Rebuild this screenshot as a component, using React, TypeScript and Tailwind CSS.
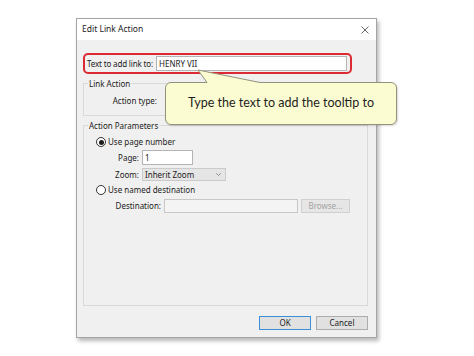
import React from 'react';

export default function App() {
  return (
    <div className="relative w-[474px] h-[356px] bg-white pt-[18px] pl-[76px] font-['Segoe_UI','Noto_Sans',sans-serif] text-[8px] text-[#1b1b1b]">
      {/* Dialog window */}
      <div className="w-[301px] h-[320px] flex flex-col border border-[#a5a5a5] shadow-[2px_3px_4px_rgba(0,0,0,0.28)]">
        {/* Title bar */}
        <div className="h-[21px] flex items-center justify-between bg-white pl-[5px] pr-[7px]">
          <span className="text-[8.5px] text-[#222]">Edit Link Action</span>
          <svg width="8" height="8" viewBox="0 0 8 8">
            <path d="M0.5 0.5 L7.5 7.5 M7.5 0.5 L0.5 7.5" stroke="#555" strokeWidth="0.9" />
          </svg>
        </div>

        {/* Body */}
        <div className="flex-1 flex flex-col bg-[#f0f0f0] pl-[6px] pr-[8px] pt-[13px]">
          {/* Highlighted text row */}
          <div className="w-[269px] h-[21px] flex items-center justify-between rounded-[5px] border-2 border-[#dc2a32] pl-[2px] pr-[3px]">
            <span className="whitespace-nowrap tracking-[-0.15px]">Text to add link to:</span>
            <div className="w-[191px] h-[15px] flex items-center bg-white border border-[#b4b4b4] pl-[2px]">HENRY VII</div>
          </div>

          {/* Link Action group */}
          <fieldset className="mt-[4px] h-[38px] border border-[#d9d9d9]">
            <legend className="ml-[4px] px-[1px] leading-[11px]">Link Action</legend>
            <div className="mt-[5px] flex items-center h-[14px]">
              <span className="w-[55px] ml-[18px] text-right">Action type:</span>
              <div className="ml-[10px] w-[150px] h-[14px] bg-[#e5e5e5] border border-[#c2c2c2]" />
            </div>
          </fieldset>

          {/* Action Parameters group */}
          <fieldset className="mt-[4px] h-[186px] border border-[#d9d9d9]">
            <legend className="ml-[4px] px-[1px] leading-[11px]">Action Parameters</legend>

            <div className="mt-[5px] pl-[12px] flex items-center h-[12px] gap-[2px]">
              <span className="w-[10px] h-[10px] rounded-full border border-[#333] bg-white flex items-center justify-center">
                <span className="w-[5px] h-[5px] rounded-full bg-[#1b1b1b]" />
              </span>
              <span>Use page number</span>
            </div>

            <div className="mt-[2px] flex items-center h-[15px]">
              <span className="w-[55px] text-right">Page:</span>
              <div className="ml-[3px] w-[51px] h-[15px] flex items-center bg-white border border-[#b4b4b4] pl-[2px]">1</div>
            </div>

            <div className="mt-[3px] flex items-center h-[13px]">
              <span className="w-[55px] text-right">Zoom:</span>
              <div className="ml-[3px] w-[84px] h-[13px] flex items-center justify-between bg-[#e5e5e5] border border-[#cacaca] pl-[2px] pr-[4px]">
                <span>Inherit Zoom</span>
                <svg width="5" height="3" viewBox="0 0 5 3">
                  <path d="M0.3 0.3 L2.5 2.5 L4.7 0.3" fill="none" stroke="#777" strokeWidth="0.8" />
                </svg>
              </div>
            </div>

            <div className="mt-[3px] pl-[12px] flex items-center h-[12px] gap-[2px]">
              <span className="w-[10px] h-[10px] rounded-full border border-[#333] bg-white" />
              <span>Use named destination</span>
            </div>

            <div className="mt-[3px] flex items-center h-[14px]">
              <span className="w-[77px] text-right">Destination:</span>
              <div className="ml-[3px] w-[134px] h-[14px] bg-[#f4f4f4] border border-[#c8c8c8]" />
              <div className="ml-[3px] w-[49px] h-[14px] flex items-center justify-center bg-[#e6e6e6] border border-[#d0d0d0] text-[#a3a3a3]">Browse...</div>
            </div>
          </fieldset>

          {/* Buttons */}
          <div className="mt-[10px] flex justify-end gap-[5px]">
            <button className="w-[52px] h-[14px] flex items-center justify-center bg-[#e1e1e1] border border-[#3c8fd6]">OK</button>
            <button className="w-[52px] h-[14px] flex items-center justify-center bg-[#e1e1e1] border border-[#adadad]">Cancel</button>
          </div>
        </div>
      </div>

      {/* Callout tooltip */}
      <div className="absolute left-[165px] top-[82px] w-[232px] h-[43px] flex items-center justify-center rounded-[6px] border border-[#93937a] bg-[#fcfcd2] font-['Lato',sans-serif] text-[12.5px] text-[#1e1e1e] shadow-[1px_1px_2px_rgba(0,0,0,0.15)]">
        Type the text to add the tooltip to
      </div>
      <svg className="absolute left-[195px] top-[68px]" width="70" height="17" viewBox="0 0 70 17">
        <polygon points="3,2 12,14.5 12,16.5 65,16.5 65,14.5" fill="#fcfcd2" />
        <path d="M3 2 L12 14.5 M3 2 L65 14.5" stroke="#93937a" strokeWidth="1" fill="none" />
      </svg>
    </div>
  );
}
